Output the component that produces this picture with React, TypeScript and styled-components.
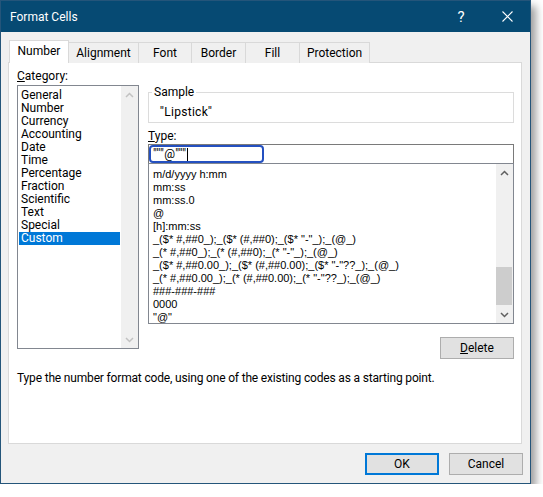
import React from 'react';
import styled, { createGlobalStyle } from 'styled-components';

const UI_FONT = `"Segoe UI", Roboto, "Noto Sans", sans-serif`;
const CODE_FONT = `"Liberation Sans", Arial, sans-serif`;

const Global = createGlobalStyle`
  html, body {
    margin: 0;
    padding: 0;
    background: #ffffff;
  }
  body {
    font-family: ${UI_FONT};
    font-size: 12px;
    color: #000;
  }
  * { box-sizing: border-box; }
`;

const Window = styled.div`
  width: 531px;
  height: 484px;
  border: 1px solid #24557a;
  background: #f0f0f0;
  box-shadow: 5px 6px 8px rgba(0, 0, 0, 0.38);
  display: flex;
  flex-direction: column;
`;

const TitleBar = styled.div`
  height: 31px;
  flex: none;
  background: #064a73;
  color: #fff;
  display: flex;
  align-items: center;
  padding-left: 9px;
`;

const TitleText = styled.div`
  flex: 1;
  font-size: 12px;
  line-height: 16px;
`;

const CaptionButton = styled.div`
  width: 46px;
  height: 31px;
  display: flex;
  align-items: center;
  justify-content: center;
  color: #fff;
  font-size: 15px;
`;

const Body = styled.div`
  flex: 1;
  display: flex;
  flex-direction: column;
  padding: 8px 8px 0 7px;
`;

const TabStrip = styled.div`
  height: 23px;
  display: flex;
  align-items: flex-end;
  padding-left: 1px;
`;

const Tab = styled.div<{ $w: number; $active?: boolean }>`
  width: ${(p) => p.$w}px;
  height: ${(p) => (p.$active ? 23 : 21)}px;
  margin-left: -1px;
  &:first-child { margin-left: 0; }
  border: 1px solid #d9d9d9;
  border-bottom: none;
  background: ${(p) => (p.$active ? '#ffffff' : '#f0f0f0')};
  position: relative;
  z-index: ${(p) => (p.$active ? 1 : 0)};
  display: flex;
  align-items: center;
  justify-content: center;
  padding-bottom: ${(p) => (p.$active ? 2 : 1)}px;
  line-height: 16px;
`;

const Panel = styled.div`
  margin-top: -1px;
  height: 382px;
  flex: none;
  border: 1px solid #d9d9d9;
  background: #ffffff;
  padding: 5px 8px 0 8px;
  display: flex;
  flex-direction: column;
`;

const Columns = styled.div`
  display: grid;
  grid-template-columns: 122px 366px;
  column-gap: 9px;
  align-items: start;
`;

const LeftColumn = styled.div`
  display: flex;
  flex-direction: column;
`;

const RightColumn = styled.div`
  display: flex;
  flex-direction: column;
`;

const FieldLabel = styled.div`
  line-height: 16px;
  height: 16px;
  margin-bottom: 1px;
  u { text-decoration: underline; text-underline-offset: 1px; }
`;

const ListBox = styled.div<{ $h: number }>`
  height: ${(p) => p.$h}px;
  border: 1px solid #828790;
  background: #fff;
  display: flex;
`;

const ListItems = styled.div<{ $top: number }>`
  flex: 1;
  min-width: 0;
  padding: ${(p) => p.$top}px 1px 0 1px;
  overflow: hidden;
`;

const CategoryItem = styled.div<{ $selected?: boolean }>`
  height: 13px;
  line-height: 13px;
  padding-left: 2px;
  white-space: nowrap;
  background: ${(p) => (p.$selected ? '#0078d7' : 'transparent')};
  color: ${(p) => (p.$selected ? '#ffffff' : '#000000')};
`;

const CodeItem = styled.div`
  height: 13px;
  line-height: 13px;
  padding-left: 3px;
  white-space: nowrap;
  font-family: ${CODE_FONT};
  font-size: 11px;
`;

const ScrollBar = styled.div`
  width: 17px;
  flex: none;
  background: #f0f0f0;
  display: flex;
  flex-direction: column;
`;

const ScrollArrow = styled.div`
  height: 17px;
  flex: none;
  display: flex;
  align-items: center;
  justify-content: center;
`;

const ScrollTrack = styled.div`
  flex: 1;
  display: flex;
  flex-direction: column;
  justify-content: flex-end;
  padding: 0 1px 0 0;
`;

const ScrollThumb = styled.div<{ $h: number }>`
  height: ${(p) => p.$h}px;
  background: #cdcdcd;
  margin-bottom: 1px;
`;

const SampleGroup = styled.fieldset`
  margin: 16px 0 0 0;
  padding: 0 3px 2px 3px;
  border: 1px solid #dcdcdc;
  min-width: 0;
`;

const SampleLegend = styled.legend`
  padding: 0 2px;
  line-height: 16px;
  font-size: 12px;
`;

const SampleText = styled.div`
  line-height: 16px;
  margin: 4px 0 0 8px;
  letter-spacing: 0.3px;
`;

const TypeLabel = styled(FieldLabel)`
  margin-top: 5px;
  margin-bottom: 0;
`;

const TypeInput = styled.div`
  height: 20px;
  border: 1px solid #7a7a7a;
  background: #fff;
  padding: 0;
  display: flex;
  align-items: stretch;
`;

const FocusMark = styled.span`
  display: inline-flex;
  align-items: center;
  width: 115px;
  border: 2px solid #2450c0;
  border-radius: 4px;
  padding-left: 2px;
  line-height: 14px;
  letter-spacing: 0.3px;
`;

const Caret = styled.span`
  display: inline-block;
  width: 1px;
  height: 13px;
  background: #000;
  margin-left: 1px;
`;

const CodeList = styled(ListBox)`
  margin-top: -1px;
`;

const Button = styled.div<{ $default?: boolean }>`
  width: 74px;
  height: 22px;
  background: #e1e1e1;
  border: ${(p) => (p.$default ? '2px solid #0078d7' : '1px solid #adadad')};
  display: flex;
  align-items: center;
  justify-content: center;
  line-height: 16px;
  u { text-decoration: underline; text-underline-offset: 1px; }
`;

const DeleteButton = styled(Button)`
  align-self: flex-end;
  margin-top: 13px;
`;

const Hint = styled.div`
  margin-top: 11px;
  line-height: 16px;
  letter-spacing: -0.17px;
`;

const Footer = styled.div`
  display: flex;
  justify-content: flex-end;
  gap: 10px;
  padding-top: 9px;
  margin-right: -1px;
`;

const Chevron: React.FC<{ dir: 'up' | 'down'; color: string }> = ({ dir, color }) => (
  <svg width="9" height="6" viewBox="0 0 9 6">
    <polyline
      points={dir === 'up' ? '1,5 4.5,1.5 8,5' : '1,1 4.5,4.5 8,1'}
      fill="none"
      stroke={color}
      strokeWidth="1.5"
    />
  </svg>
);

const CloseGlyph = () => (
  <svg width="11" height="11" viewBox="0 0 11 11">
    <path d="M0.5 0.5 L10.5 10.5 M10.5 0.5 L0.5 10.5" stroke="#fff" strokeWidth="1.1" />
  </svg>
);

const tabs = [
  { label: 'Number', w: 60, active: true },
  { label: 'Alignment', w: 71 },
  { label: 'Font', w: 54 },
  { label: 'Border', w: 55 },
  { label: 'Fill', w: 55 },
  { label: 'Protection', w: 71 },
];

const categories = [
  'General',
  'Number',
  'Currency',
  'Accounting',
  'Date',
  'Time',
  'Percentage',
  'Fraction',
  'Scientific',
  'Text',
  'Special',
  'Custom',
];

const codes = [
  'm/d/yyyy h:mm',
  'mm:ss',
  'mm:ss.0',
  '@',
  '[h]:mm:ss',
  '_($* #,##0_);_($* (#,##0);_($* "-"_);_(@_)',
  '_(* #,##0_);_(* (#,##0);_(* "-"_);_(@_)',
  '_($* #,##0.00_);_($* (#,##0.00);_($* "-"??_);_(@_)',
  '_(* #,##0.00_);_(* (#,##0.00);_(* "-"??_);_(@_)',
  '###-###-###',
  '0000',
  '"@"',
];

export default function App() {
  return (
    <>
      <Global />
      <Window>
        <TitleBar>
          <TitleText>Format Cells</TitleText>
          <CaptionButton>?</CaptionButton>
          <CaptionButton>
            <CloseGlyph />
          </CaptionButton>
        </TitleBar>
        <Body>
          <TabStrip>
            {tabs.map((t) => (
              <Tab key={t.label} $w={t.w} $active={t.active}>
                {t.label}
              </Tab>
            ))}
          </TabStrip>
          <Panel>
            <Columns>
              <LeftColumn>
                <FieldLabel>
                  <u>C</u>ategory:
                </FieldLabel>
                <ListBox $h={264}>
                  <ListItems $top={3}>
                    {categories.map((c) => (
                      <CategoryItem key={c} $selected={c === 'Custom'}>
                        {c}
                      </CategoryItem>
                    ))}
                  </ListItems>
                  <ScrollBar>
                    <ScrollArrow>
                      <Chevron dir="up" color="#c2c2c2" />
                    </ScrollArrow>
                    <ScrollTrack />
                    <ScrollArrow>
                      <Chevron dir="down" color="#c2c2c2" />
                    </ScrollArrow>
                  </ScrollBar>
                </ListBox>
              </LeftColumn>
              <RightColumn>
                <SampleGroup>
                  <SampleLegend>Sample</SampleLegend>
                  <SampleText>''Lipstick''</SampleText>
                </SampleGroup>
                <TypeLabel>
                  <u>T</u>ype:
                </TypeLabel>
                <TypeInput>
                  <FocusMark>
                    {`"''"@"''"`}
                    <Caret />
                  </FocusMark>
                </TypeInput>
                <CodeList $h={161}>
                  <ListItems $top={4}>
                    {codes.map((c) => (
                      <CodeItem key={c}>{c}</CodeItem>
                    ))}
                  </ListItems>
                  <ScrollBar>
                    <ScrollArrow>
                      <Chevron dir="up" color="#606060" />
                    </ScrollArrow>
                    <ScrollTrack>
                      <ScrollThumb $h={38} />
                    </ScrollTrack>
                    <ScrollArrow>
                      <Chevron dir="down" color="#606060" />
                    </ScrollArrow>
                  </ScrollBar>
                </CodeList>
                <DeleteButton>
                  <u>D</u>elete
                </DeleteButton>
              </RightColumn>
            </Columns>
            <Hint>Type the number format code, using one of the existing codes as a starting point.</Hint>
          </Panel>
          <Footer>
            <Button $default>OK</Button>
            <Button>Cancel</Button>
          </Footer>
        </Body>
      </Window>
    </>
  );
}
